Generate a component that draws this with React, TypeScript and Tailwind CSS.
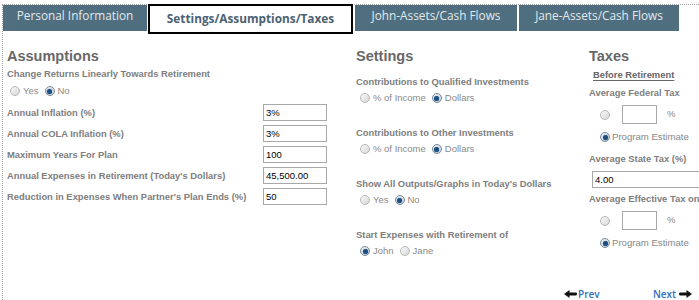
import React from "react";

function Radio({ checked }: { checked?: boolean }) {
  if (checked) {
    return (
      <span className="inline-flex w-[10px] h-[10px] shrink-0 items-center justify-center rounded-full border border-[#7a8894] bg-linear-to-br from-[#f2f5f8] to-[#c3ccd4]">
        <span className="block w-[5px] h-[5px] rounded-full bg-[#1d4e7e] shadow-[0_0_1px_#2c78c0]" />
      </span>
    );
  }
  return (
    <span className="inline-block w-[10px] h-[10px] shrink-0 rounded-full border border-[#b8b8b8] bg-linear-to-br from-[#fafafa] to-[#d6d6d6]" />
  );
}

function RadioGroup({ options, sel, indent }: { options: string[]; sel: number; indent: string }) {
  return (
    <div className={`flex h-[12px] items-center ${indent}`}>
      {options.map((o, i) => (
        <span key={o} className={`flex items-center ${i > 0 ? "ml-[6px]" : ""}`}>
          <Radio checked={i === sel} />
          <span className="ml-[3px] text-[9.5px] leading-[12px] text-[#8a8a8a]">{o}</span>
        </span>
      ))}
    </div>
  );
}

const label = "font-bold text-[9.4px] leading-[12px] text-[#7e7e7e] whitespace-nowrap";
const heading = "font-bold text-[14.5px] leading-4 text-[#686868] mt-[14px]";
const box = "border border-[#a8a8a8] bg-white text-[9.5px] text-black pl-[2px] outline-none font-['Liberation_Sans',Arial,sans-serif]";

function Row({ text, value }: { text: string; value: string }) {
  return (
    <div className="flex h-[17px] items-center">
      <div className={`${label} w-[256px]`}>{text}</div>
      <input readOnly value={value} className={`${box} w-[64px] h-[17px]`} />
    </div>
  );
}

function Arrow({ dir }: { dir: "left" | "right" }) {
  return (
    <svg width="13" height="8" viewBox="0 0 13 8" className={dir === "right" ? "rotate-180" : ""}>
      <path d="M0 4 L5.5 0 V2.6 H12 Q13 2.6 13 4 Q13 5.4 12 5.4 H5.5 V8 Z" fill="#111" />
    </svg>
  );
}

export default function App() {
  const tab = "h-[26px] bg-[#4f6f80] text-[#e2e9ed] text-[11.8px] leading-4 pt-[2px] text-center whitespace-nowrap";
  return (
    <div className="w-[699px] h-[300px] overflow-hidden bg-white font-['Liberation_Sans',Arial,sans-serif]">
      <div className="mt-[4px] ml-[2px] h-[296px] border-t border-l border-dotted border-[#a0a0a0] flex flex-col">
        {/* Tabs */}
        <div className="flex items-start font-['Open_Sans',sans-serif]">
          <div className={`${tab} w-[144px]`}>Personal Information</div>
          <div className="ml-[1px] -mt-px w-[205px] h-[30px] border-2 border-black bg-white text-center pt-[4px] text-[11.8px] leading-4 font-bold text-[#4a6272] whitespace-nowrap">
            Settings/Assumptions/Taxes
          </div>
          <div className={`${tab} ml-[2px] w-[162px]`}>John-Assets/Cash Flows</div>
          <div className={`${tab} ml-[2px] w-[160px]`}>Jane-Assets/Cash Flows</div>
        </div>

        {/* Columns */}
        <div className="flex">
          {/* Assumptions */}
          <div className="w-[353px] pl-[4px] shrink-0">
            <div className={heading}>Assumptions</div>
            <div className={`${label} mt-[4px]`}>Change Returns Linearly Towards Retirement</div>
            <div className="mt-[5px]">
              <RadioGroup options={["Yes", "No"]} sel={1} indent="pl-[3px]" />
            </div>
            <div className="mt-[7px] flex flex-col gap-[4px]">
              <Row text="Annual Inflation (%)" value="3%" />
              <Row text="Annual COLA Inflation (%)" value="3%" />
              <Row text="Maximum Years For Plan" value="100" />
              <Row text="Annual Expenses in Retirement (Today's Dollars)" value="45,500.00" />
              <Row text="Reduction in Expenses When Partner's Plan Ends (%)" value="50" />
            </div>
          </div>

          {/* Settings */}
          <div className="w-[233px] shrink-0">
            <div className={heading}>Settings</div>
            <div className="mt-[12px]">
              <div className={label}>Contributions to Qualified Investments</div>
              <div className="mt-[4px]">
                <RadioGroup options={["% of Income", "Dollars"]} sel={1} indent="pl-[4px]" />
              </div>
            </div>
            <div className="mt-[23px]">
              <div className={label}>Contributions to Other Investments</div>
              <div className="mt-[4px]">
                <RadioGroup options={["% of Income", "Dollars"]} sel={1} indent="pl-[4px]" />
              </div>
            </div>
            <div className="mt-[23px]">
              <div className={label}>Show All Outputs/Graphs in Today's Dollars</div>
              <div className="mt-[4px]">
                <RadioGroup options={["Yes", "No"]} sel={1} indent="pl-[4px]" />
              </div>
            </div>
            <div className="mt-[23px]">
              <div className={label}>Start Expenses with Retirement of</div>
              <div className="mt-[4px]">
                <RadioGroup options={["John", "Jane"]} sel={0} indent="pl-[4px]" />
              </div>
            </div>
          </div>

          {/* Taxes */}
          <div className="w-[140px] shrink-0">
            <div className={heading}>Taxes</div>
            <div className="mt-[5px] pl-[4px] font-bold text-[9.4px] leading-[12px] text-[#666] underline underline-offset-[2px]">
              Before Retirement
            </div>
            <div className={`${label} mt-[6px]`}>Average Federal Tax</div>
            <div className="mt-[6px] flex h-[19px] items-center pl-[11px]">
              <Radio />
              <input readOnly value="" className={`${box} ml-[12px] w-[35px] h-[19px]`} />
              <span className="ml-[10px] text-[9.5px] text-[#888]">%</span>
            </div>
            <div className="mt-[7px] flex h-[12px] items-center pl-[11px]">
              <Radio checked />
              <span className="ml-[2px] text-[9.6px] leading-[12px] text-[#888] whitespace-nowrap">Program Estimate</span>
            </div>
            <div className={`${label} mt-[10px]`}>Average State Tax (%)</div>
            <input readOnly value="4.00" className={`${box} mt-[6px] ml-[3px] w-[130px] h-[17px] block`} />
            <div className={`${label} mt-[5px]`}>Average Effective Tax on</div>
            <div className="mt-[6px] flex h-[19px] items-center pl-[11px]">
              <Radio />
              <input readOnly value="" className={`${box} ml-[12px] w-[35px] h-[19px]`} />
              <span className="ml-[10px] text-[9.5px] text-[#888]">%</span>
            </div>
            <div className="mt-[7px] flex h-[12px] items-center pl-[11px]">
              <Radio checked />
              <span className="ml-[2px] text-[9.6px] leading-[12px] text-[#888] whitespace-nowrap">Program Estimate</span>
            </div>
          </div>
        </div>

        {/* Prev / Next */}
        <div className="mt-[30px] flex justify-end font-['Open_Sans',sans-serif]">
          <div className="mr-[7px] flex w-[128px] items-center justify-between text-[10px] leading-[14px] font-semibold text-[#2f6fbf]">
            <span className="flex items-center">
              <Arrow dir="left" />
              <span className="ml-[1px]">Prev</span>
            </span>
            <span className="flex items-center">
              <span className="mr-[3px]">Next</span>
              <Arrow dir="right" />
            </span>
          </div>
        </div>
      </div>
    </div>
  );
}
